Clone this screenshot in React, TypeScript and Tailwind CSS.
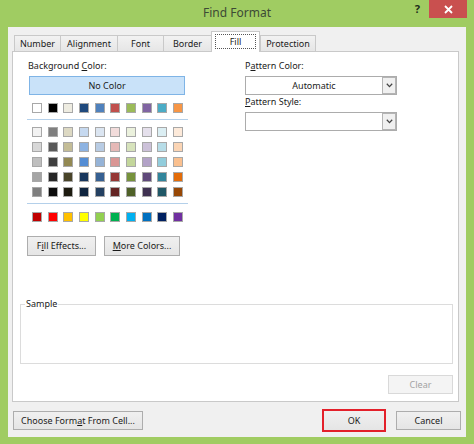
import React from "react";

const row1 = ["#FFFFFF", "#000000", "#EEECE1", "#1F497D", "#4F81BD", "#C0504D", "#9BBB59", "#8064A2", "#4BACC6", "#F79646"];
const theme = [
  ["#F2F2F2", "#7F7F7F", "#DDD9C3", "#C6D9F0", "#DBE5F1", "#F2DCDB", "#EBF1DD", "#E5E0EC", "#DBEEF3", "#FDEADA"],
  ["#D8D8D8", "#595959", "#C4BD97", "#8DB3E2", "#B8CCE4", "#E5B9B7", "#D7E3BC", "#CCC1D9", "#B7DDE8", "#FBD5B5"],
  ["#BFBFBF", "#3F3F3F", "#938953", "#548DD4", "#95B3D7", "#D99694", "#C3D69B", "#B2A2C7", "#92CDDC", "#FAC08F"],
  ["#A5A5A5", "#262626", "#494429", "#17365D", "#366092", "#953734", "#76923C", "#5F497A", "#31859B", "#E36C09"],
  ["#7F7F7F", "#0C0C0C", "#1D1B10", "#0F243E", "#244061", "#632423", "#4F6128", "#3F3151", "#205867", "#974806"],
];
const standard = ["#C00000", "#FF0000", "#FFC000", "#FFFF00", "#92D050", "#00B050", "#00B0F0", "#0070C0", "#002060", "#7030A0"];

function Swatch({ c }: { c: string }) {
  return <div className="w-[10px] h-[10px] border border-[#a8a8a8]" style={{ backgroundColor: c }} />;
}

function SwatchRow({ colors }: { colors: string[] }) {
  return (
    <div className="flex gap-x-[5.67px]">
      {colors.map((c, i) => (
        <Swatch key={i} c={c} />
      ))}
    </div>
  );
}

function Btn({ children, className = "" }: { children: React.ReactNode; className?: string }) {
  return (
    <div
      className={
        "flex items-center justify-center border border-[#adadad] bg-gradient-to-b from-[#f0f0f0] to-[#e5e5e5] text-[#1a1a1a] leading-[12px] " +
        className
      }
    >
      {children}
    </div>
  );
}

function Dropdown({ value }: { value?: string }) {
  return (
    <div className="w-[152px] h-[19px] border border-[#acacac] bg-white flex items-center">
      <div className="flex-1 text-center leading-[12px]">{value}</div>
      <div className="w-[14px] h-[17px] border border-[#b4b4b4] bg-[#f0f0f0] flex items-center justify-center">
        <svg width="7" height="5" viewBox="0 0 7 5">
          <path d="M0.8 0.8 L3.5 3.6 L6.2 0.8" fill="none" stroke="#444" strokeWidth="1.3" />
        </svg>
      </div>
    </div>
  );
}

const tabs = [
  { label: "Number", w: 46 },
  { label: "Alignment", w: 57 },
  { label: "Font", w: 46 },
  { label: "Border", w: 48 },
  { label: "Fill", w: 49, sel: true },
  { label: "Protection", w: 56, last: true },
];

export default function App() {
  return (
    <div
      className="w-[474px] h-[444px] bg-[#a0cc62] flex flex-col text-[9px] text-[#1a1a1a]"
      style={{ fontFamily: "'Noto Sans', 'Open Sans', sans-serif" }}
    >
      {/* title bar */}
      <div className="h-[27px] grid grid-cols-[1fr_auto_1fr] items-start shrink-0">
        <div />
        <div className="pt-[5px] text-[12px] leading-[16px] text-[#3d4a35]">Find Format</div>
        <div className="flex justify-end items-start pr-[7px]">
          <span className="mt-[3px] mr-[9px] text-[11px] leading-[12px] font-bold text-[#1d2e1a]">?</span>
          <div className="w-[38px] h-[18px] bg-[#c9504f] flex items-center justify-center">
            <svg width="9" height="9" viewBox="0 0 9 9">
              <path d="M1 1 L8 8 M8 1 L1 8" stroke="#fff" strokeWidth="1.8" />
            </svg>
          </div>
        </div>
      </div>

      {/* client area */}
      <div className="mx-[8px] h-[410px] bg-[#f0f0f0] flex flex-col pl-[4px] pr-[5px]">
        {/* tabs */}
        <div className="h-[24px] flex items-end pl-[2px] shrink-0">
          {tabs.map((t) =>
            t.sel ? (
              <div
                key={t.label}
                className="relative z-10 -mb-px h-[21px] border border-b-0 border-[#c9c9c9] bg-white flex items-start justify-center pt-[2px]"
                style={{ width: t.w }}
              >
                <div className="w-[41px] h-[15px] border border-dotted border-[#555] flex items-center justify-center leading-[12px]">
                  {t.label}
                </div>
              </div>
            ) : (
              <div
                key={t.label}
                className={
                  "h-[16px] border-t border-l border-[#c9c9c9] bg-gradient-to-b from-[#f2f2f2] to-[#e6e6e6] flex items-center justify-center leading-[12px] " +
                  (t.last ? "border-r" : "")
                }
                style={{ width: t.w }}
              >
                {t.label}
              </div>
            )
          )}
        </div>

        {/* panel */}
        <div className="w-[447px] h-[351px] border border-[#c9c9c9] bg-white flex flex-col shrink-0">
          <div className="flex pl-[14px] pt-[8px]">
            {/* left column */}
            <div className="w-[162px] flex flex-col">
              <div className="pl-[1px] leading-[12px]">
                Background <span className="underline">C</span>olor:
              </div>
              <div className="ml-[2px] mt-[4px] w-[156px] h-[19px] bg-[#c9e2f9] border border-[#7fb4e6] flex items-center justify-center leading-[12px]">
                No Color
              </div>
              <div className="ml-[5px] mt-[8px]">
                <SwatchRow colors={row1} />
              </div>
              <div className="mt-[6px] w-[161px] h-px bg-[#b4d0ea]" />
              <div className="ml-[5px] mt-[7px] flex flex-col gap-y-[5.1px]">
                {theme.map((r, i) => (
                  <SwatchRow key={i} colors={r} />
                ))}
              </div>
              <div className="mt-[6px] w-[161px] h-px bg-[#b4d0ea]" />
              <div className="ml-[5px] mt-[8px]">
                <SwatchRow colors={standard} />
              </div>
              <div className="mt-[14px] flex gap-[8px]">
                <Btn className="w-[69px] h-[20px]">
                  F<span className="underline">i</span>ll Effects...
                </Btn>
                <Btn className="w-[76px] h-[20px]">
                  <span className="underline">M</span>ore Colors...
                </Btn>
              </div>
            </div>
            {/* right column */}
            <div className="ml-[56px] w-[152px] flex flex-col">
              <div className="leading-[12px]">
                P<span className="underline">a</span>ttern Color:
              </div>
              <div className="mt-[4px]">
                <Dropdown value="Automatic" />
              </div>
              <div className="mt-[1px] leading-[12px]">
                <span className="underline">P</span>attern Style:
              </div>
              <div className="mt-[4px]">
                <Dropdown />
              </div>
            </div>
          </div>

          {/* sample group */}
          <div className="ml-[7px] mt-[48px] w-[433px] h-[60px] border border-[#dcdcdc] relative">
            <span className="absolute left-[4px] -top-[7px] bg-white px-[1px] leading-[12px]">Sample</span>
          </div>

          <div className="flex justify-end pr-[5px] mt-[11px]">
            <div className="w-[65px] h-[19px] border border-[#d9d9d9] bg-[#f4f4f4] flex items-center justify-center text-[#a3a3a3] leading-[12px]">
              Clear
            </div>
          </div>
        </div>

        {/* bottom buttons */}
        <div className="mt-[7px] h-[23px] flex items-center">
          <Btn className="ml-[1px] w-[130px] h-[19px]">
            Choose Form<span className="underline">a</span>t From Cell...
          </Btn>
          <div className="flex-1" />
          <div className="w-[64px] h-[23px] border-2 border-[#e3202a] bg-gradient-to-b from-[#f0f0f0] to-[#e5e5e5] flex items-center justify-center leading-[12px]">
            OK
          </div>
          <Btn className="ml-[10px] w-[65px] h-[19px]">Cancel</Btn>
        </div>
      </div>
    </div>
  );
}
